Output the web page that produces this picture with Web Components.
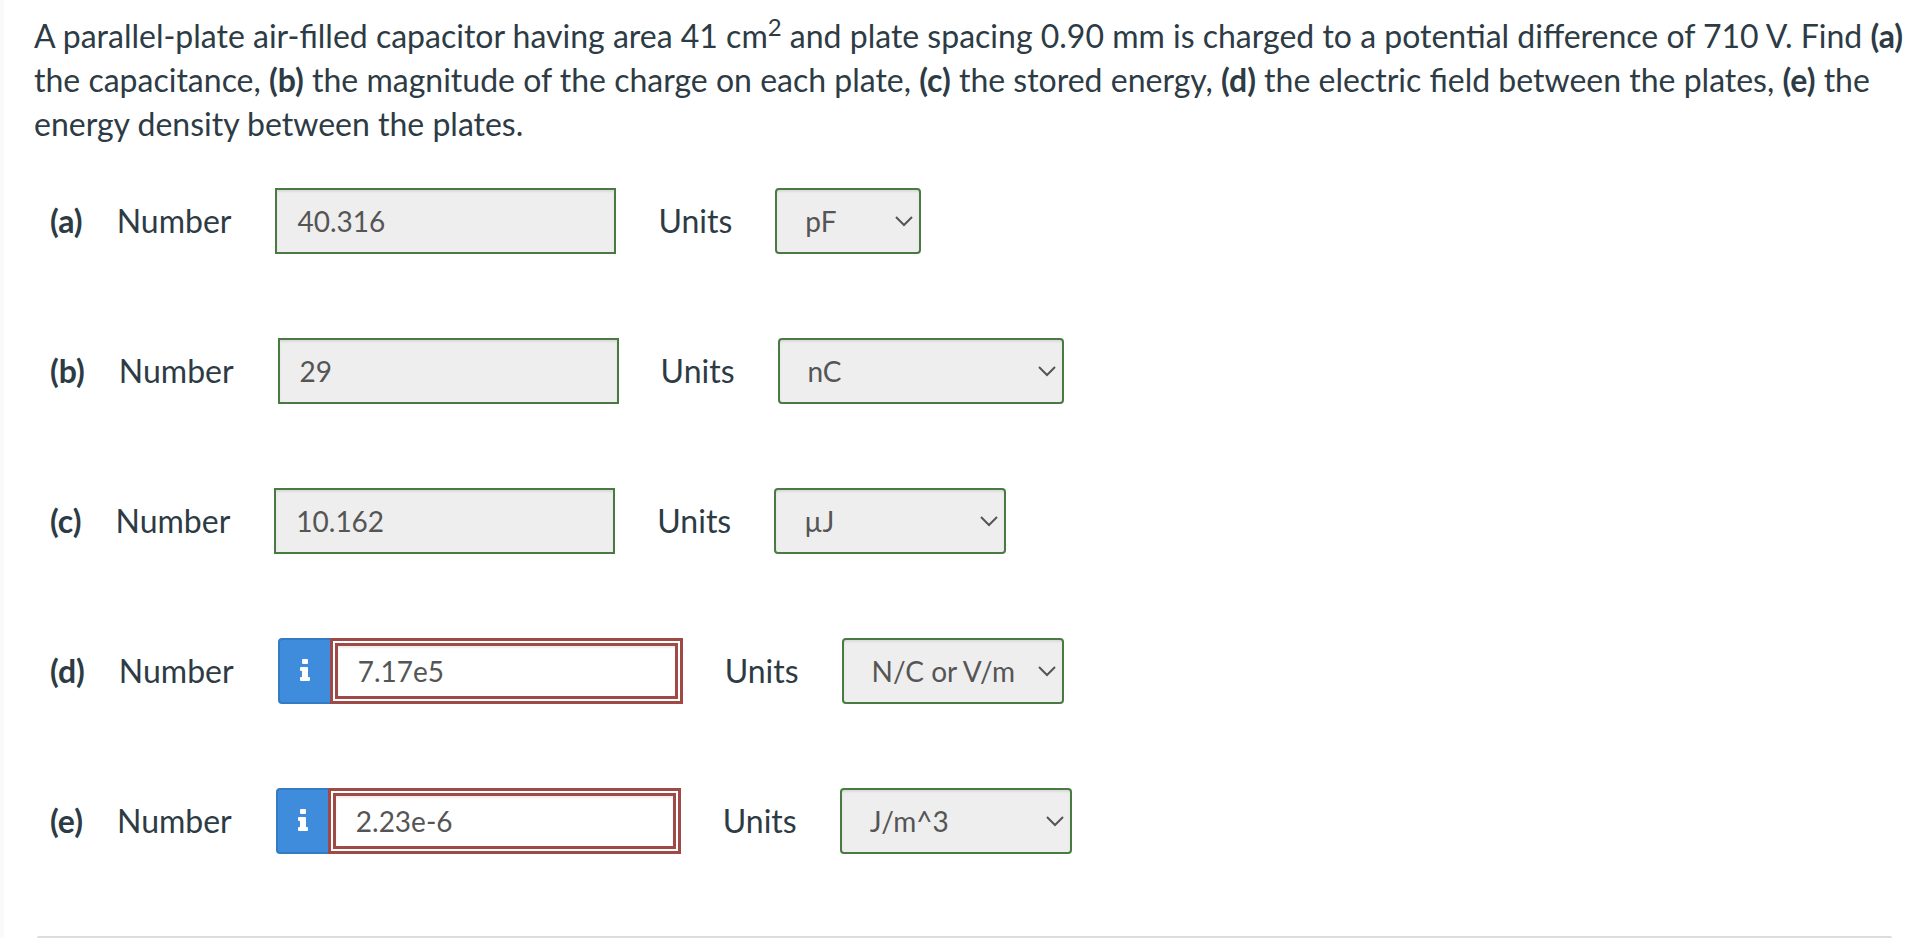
<!DOCTYPE html>
<html lang="en">
<head>
<meta charset="utf-8">
<title>Capacitor question</title>
<style>
  html { background: #fff; }
  body { margin: 0; color: #2d3b45; font: 32px/44px Lato, "Open Sans", sans-serif; }
  sup { font-size: 24px; line-height: 0; }
</style>
</head>
<body>
<question-page>
  <question-prompt>A parallel-plate air-filled capacitor having area 41 cm<sup>2</sup> and plate spacing 0.90 mm is charged to a potential difference of 710 V. Find <b>(a)</b> the capacitance, <b>(b)</b> the magnitude of the charge on each plate, <b>(c)</b> the stored energy, <b>(d)</b> the electric field between the plates, <b>(e)</b> the energy density between the plates.</question-prompt>
  <answer-row value="40.316" unit="pF" unit-width="146">(a)</answer-row>
  <answer-row value="29" unit="nC" unit-width="286">(b)</answer-row>
  <answer-row value="10.162" unit="µJ" unit-width="232">(c)</answer-row>
  <answer-row value="7.17e5" unit="N/C or V/m" unit-width="222" wrong>(d)</answer-row>
  <answer-row value="2.23e-6" unit="J/m^3" unit-width="232" wrong>(e)</answer-row>
</question-page>

<script>
class QuestionPage extends HTMLElement {
  constructor() {
    super();
    this.attachShadow({ mode: "open" }).innerHTML = `
      <style>
        :host { display: block; box-sizing: border-box; border-left: 4px solid #fafafa; padding: 14px 4px 0 30px; }
        main { display: flex; flex-direction: column; }
        hr { margin: -2px 20px 0 3px; border: 0; height: 2px; border-radius: 2px 2px 0 0; background: #dcdcdc; }
      </style>
      <main><slot></slot></main>
      <hr>`;
  }
}

class QuestionPrompt extends HTMLElement {
  constructor() {
    super();
    this.attachShadow({ mode: "open" }).innerHTML = `
      <style>
        :host { display: block; margin-bottom: 42px; }
        p { margin: 0; }
      </style>
      <p><slot></slot></p>`;
  }
}

class InfoButton extends HTMLElement {
  constructor() {
    super();
    this.attachShadow({ mode: "open" }).innerHTML = `
      <style>
        :host { display: flex; }
        button { display: flex; align-items: center; justify-content: center; box-sizing: border-box; width: 52px; margin: 0; padding: 0;
          border: 2px solid #347cc2; border-right: 0; border-radius: 4px 0 0 4px; background: #3f8cdc; color: #fff; cursor: pointer; }
        svg { display: block; }
      </style>
      <button type="button" aria-label="Information">
        <svg width="12" height="24" viewBox="0 0 12 24" fill="currentColor" aria-hidden="true">
          <rect x="3" y="0" width="6" height="5" rx="1"/>
          <path d="M2 8h6q1 0 1 1v9h1q1 0 1 1v2q0 1-1 1H2q-1 0-1-1v-2q0-1 1-1h1v-6H2q-1 0-1-1v-2q0-1 1-1z"/>
        </svg>
      </button>`;
  }
}

class AnswerRow extends HTMLElement {
  constructor() {
    super();
    this.attachShadow({ mode: "open" });
  }
  connectedCallback() {
    const wrong = this.hasAttribute("wrong");
    this.shadowRoot.innerHTML = `
      <style>
        :host { display: flex; align-items: center; height: 66px; margin-bottom: 84px; padding-left: 16px; }
        b { margin-right: 34px; }
        .number { display: flex; height: 66px; margin: 0 42px 0 44px; }
        input, select { box-sizing: border-box; height: 66px; margin: 0; border: 2px solid #497a42; background: #eee; color: #555; font: 28px/40px Lato, "Open Sans", sans-serif; box-shadow: inset 0 2px 2px rgba(0, 0, 0, .075); outline: 0; }
        input { width: 341px; padding: 0 20px; border-radius: 0; }
        .wrong input { width: 353px; border: 8px double #9f4a46; background: #fff; }
        .units { display: grid; align-items: center; margin-left: 43px; }
        select { grid-area: 1 / 1; appearance: none; padding: 0 28px; border-radius: 4px; }
        svg { grid-area: 1 / 1; justify-self: end; margin-right: 8px; pointer-events: none; }
      </style>
      <b><slot></slot></b>
      <label for="number">Number</label>
      <div class="number ${wrong ? "wrong" : ""}">
        ${wrong ? "<info-button></info-button>" : ""}
        <input id="number" type="text">
      </div>
      <label for="units">Units</label>
      <div class="units">
        <select id="units"><option></option></select>
        <svg width="18" height="12" viewBox="0 0 18 12" fill="none" stroke="#555" stroke-width="2" aria-hidden="true"><path d="M1 2l8 8 8-8"/></svg>
      </div>`;
    const input = this.shadowRoot.querySelector("input");
    input.value = this.getAttribute("value");
    input.readOnly = !wrong;
    const select = this.shadowRoot.querySelector("select");
    select.options[0].textContent = this.getAttribute("unit");
    select.style.width = this.getAttribute("unit-width") + "px";
  }
}

customElements.define("info-button", InfoButton);
customElements.define("answer-row", AnswerRow);
customElements.define("question-prompt", QuestionPrompt);
customElements.define("question-page", QuestionPage);
</script>
</body>
</html>
